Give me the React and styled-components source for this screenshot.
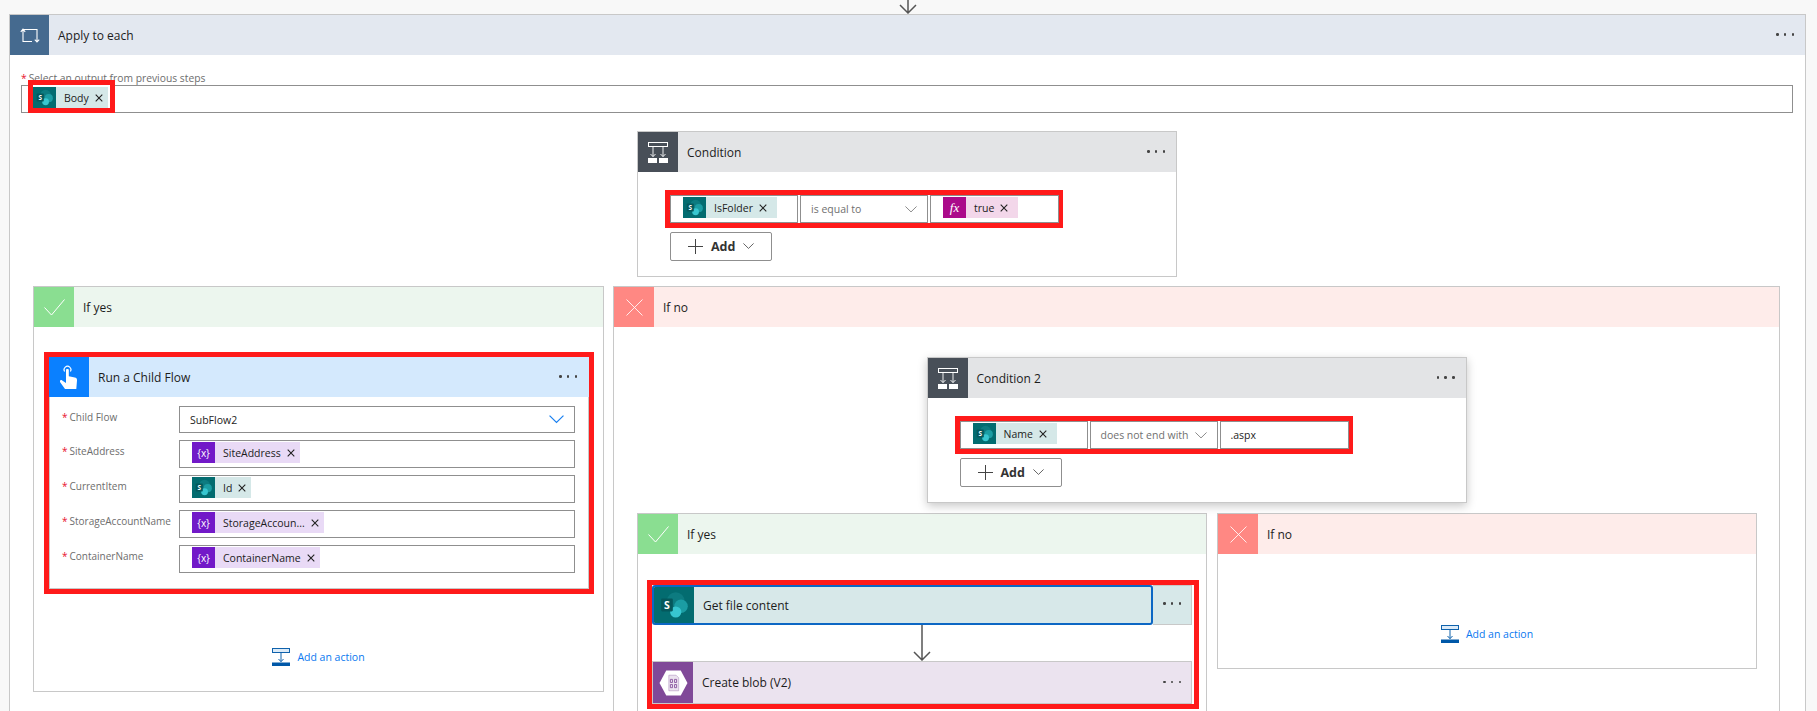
import React from "react";
import styled, { createGlobalStyle } from "styled-components";

const Global = createGlobalStyle`
  html, body { margin: 0; padding: 0; background: #f8f8f8; }
  * { box-sizing: border-box; }
  body { font-family: "Open Sans", "Noto Sans", "Liberation Sans", sans-serif; }
`;

const Page = styled.div`
  width: 1817px;
  height: 711px;
  overflow: hidden;
  background: #f8f8f8;
  padding-left: 9px;
`;
const TopArrow = styled.div`
  width: 1797px;
  height: 14px;
  display: flex;
  justify-content: center;
`;
const Scope = styled.section`
  width: 1797px;
  background: #fff;
  border: 1px solid #c8c8c8;
`;
const tones = {
  loop: ["#e3e8f0", "#456a8f"],
  cond: ["#e3e4e6", "#484f58"],
  flow: ["#d4e9fd", "#0a80ff"],
  yes: ["#ecf6ee", "#8ade91"],
  no: ["#feecea", "#ff8883"],
  sp: ["#d7e8e9", "#036c70"],
  blob: ["#ebe3ef", "#804998"],
};
const Header = styled.header`
  height: 40px;
  display: flex;
  align-items: center;
  flex: none;
  background: ${(p) => tones[p.$tone][0]};
`;
const IconBox = styled.div`
  width: ${(p) => p.$w || 40}px;
  height: 100%;
  flex: none;
  display: flex;
  align-items: center;
  justify-content: center;
  background: ${(p) => tones[p.$tone][1]};
`;
const Title = styled.div`
  flex: 1;
  margin-left: 9px;
  font-size: 12px;
  color: #1c1c1c;
`;
const Menu = styled.div`
  width: 18px;
  height: 4px;
  margin-right: ${(p) => p.$end}px;
  display: flex;
  justify-content: space-between;
  flex: none;
  & > i {
    width: 2.5px;
    height: 2.5px;
    background: #444;
    border-radius: 50%;
  }
`;
const Dots = ({ end = 11 }) => (
  <Menu $end={end}>
    <i />
    <i />
    <i />
  </Menu>
);
const ScopeBody = styled.div`
  padding: 16px 12px 0 11px;
`;
const Label = styled.div`
  height: 14px;
  font-size: 10.3px;
  line-height: 14px;
  color: #6d6d6d;
  white-space: nowrap;
  & > b {
    color: #e8112d;
    font-weight: 400;
    margin-right: 2px;
  }
`;
const Field = styled.div`
  height: ${(p) => p.$h || 28}px;
  border: 1px solid #8f8f8f;
  background: #fff;
  display: flex;
  align-items: ${(p) => (p.$center ? "center" : "flex-start")};
  justify-content: ${(p) => (p.$center ? "space-between" : "flex-start")};
  padding: ${(p) => (p.$center ? "0 10px" : "1px 0 0 12px")};
  font-size: 10.5px;
  color: ${(p) => p.$ink || "#1c1c1c"};
  white-space: nowrap;
  min-width: 0;
`;
const Highlight = styled.div`
  border: 5px solid #ff1a1a;
  background: #fff;
`;
const BodyMark = styled(Highlight)`
  margin: -7px 0 -1px -6px;
  padding: 2px 2px 0 0;
  display: flex;
  height: 33px;
`;
const Token = styled.div`
  height: 21px;
  display: inline-flex;
  align-items: center;
  flex: none;
  padding-right: ${(p) => p.$pad}px;
  background: ${(p) => (p.$kind === "sp" ? "#d5e8e8" : p.$kind === "fx" ? "#f3d7ea" : "#e9daf6")};
  font-size: 10.5px;
  color: #1c1c1c;
`;
const TokenIcon = styled.span`
  width: 23px;
  height: 100%;
  margin-right: 8px;
  flex: none;
  display: flex;
  align-items: center;
  justify-content: center;
  background: ${(p) => (p.$kind === "sp" ? "#036c70" : p.$kind === "fx" ? "#ab0a8a" : "#7219c8")};
  color: #fff;
  font-size: 10px;
`;
const Fx = styled.span`
  font-family: "Liberation Serif", serif;
  font-style: italic;
  font-size: 13px;
`;
const Remove = styled.svg`
  width: 8px;
  height: 8px;
  margin-left: 6px;
  flex: none;
`;
const SpLogo = ({ size = 17 }) => (
  <svg width={size} height={size} viewBox="0 0 24 24">
    <circle cx="13.5" cy="8.500" r="7.500" fill="#0d7b80" />
    <circle cx="18" cy="13" r="5.800" fill="#1b9da3" />
    <circle cx="13.500" cy="18" r="4.800" fill="#37c6d0" />
    <rect x="1" y="6.500" width="10" height="11" rx="1" fill="#05585c" />
    <text x="6" y="15" fontSize="9" fontWeight="700" fill="#fff" textAnchor="middle" fontFamily="Open Sans">
      S
    </text>
  </svg>
);
const Chip = ({ kind, pad = 5, children }) => (
  <Token $kind={kind} $pad={pad}>
    <TokenIcon $kind={kind}>
      {kind === "sp" ? <SpLogo /> : kind === "fx" ? <Fx>fx</Fx> : <span>{"{x}"}</span>}
    </TokenIcon>
    {children}
    <Remove viewBox="0 0 8 8">
      <path d="M.7.7l6.600 6.600M7.300.7L.7 7.300" stroke="#222" strokeWidth="1.100" />
    </Remove>
  </Token>
);
const Chevron = ({ color = "#8a8a8a", w = 12 }) => (
  <svg width={w} height={w * 0.55} viewBox="0 0 11 6" style={{ flex: "none" }}>
    <path d="M.4.4l5.100 5 5.100-5" fill="none" stroke={color} strokeWidth="0.9" />
  </svg>
);
const CondCard = styled.section`
  width: 540px;
  height: ${(p) => p.$h}px;
  flex: none;
  margin: ${(p) => p.$m};
  display: flex;
  flex-direction: column;
  background: #fff;
  border: 1px solid #c8c8c8;
  ${(p) => p.$raised && "box-shadow: 0 3px 9px rgba(0,0,0,.22); position: relative;"}
`;
const CondMark = styled(Highlight)`
  width: 398px;
  margin: 18px 0 0 27px;
  display: grid;
  grid-template-columns: 128px 128px 129px;
  column-gap: 2px;
  height: 38px;
`;
const AddButton = styled.div`
  width: 102px;
  height: 29px;
  margin: 4px 0 0 32px;
  border: 1px solid #8f8f8f;
  border-radius: 2px;
  display: flex;
  align-items: center;
  padding-left: 17px;
  font-size: 12.5px;
  font-weight: 700;
  color: #333;
`;
const AddLabel = styled.span`
  margin: 0 8px 0 8px;
`;
const Branches = styled.div`
  display: grid;
  grid-template-columns: ${(p) => p.$cols};
  column-gap: ${(p) => p.$gap}px;
  align-items: start;
  margin: ${(p) => p.$m};
`;
const Panel = styled.section`
  border: 1px solid #c8c8c8;
  background: #fff;
  display: flex;
  flex-direction: column;
`;
const PanelBody = styled.div`
  padding: ${(p) => p.$p};
  display: flex;
  flex-direction: column;
`;
const FlowMark = styled(Highlight)`
  height: 242px;
  display: flex;
  flex-direction: column;
`;
const FlowCard = styled.div`
  flex: 1;
  border: 1px solid #c8c8c8;
  border-top: 0;
  display: flex;
  flex-direction: column;
`;
const FieldGrid = styled.div`
  padding: 9px 13px 0 12px;
  display: grid;
  grid-template-columns: 117px 1fr;
  row-gap: 7px;
`;
const FieldLabel = styled.div`
  font-size: 10px;
  line-height: 14px;
  padding-top: 4px;
  color: #6d6d6d;
  white-space: nowrap;
  & > b {
    color: #e8112d;
    font-weight: 400;
    margin-right: 2px;
  }
`;
const AddAction = styled.div`
  display: flex;
  align-items: center;
  justify-content: center;
  gap: 7px;
  margin-top: ${(p) => p.$top}px;
  margin-bottom: ${(p) => p.$bottom}px;
  height: 18px;
  font-size: 10.5px;
  color: #0a78f0;
`;
const AddIcon = () => (
  <svg width="18" height="18" viewBox="0 0 18 18">
    <rect x=".5" y=".5" width="17" height="4" fill="#dcebf8" stroke="#0f62ac" />
    <path d="M9 4.500v9M6.500 11l2.500 2.700 2.500-2.700" fill="none" stroke="#0f62ac" />
    <rect y="14.500" width="18" height="3.500" fill="#0058a8" />
  </svg>
);
const ActionMark = styled(Highlight)`
  height: 129px;
  display: flex;
  flex-direction: column;
  padding-right: 2px;
`;
const StepRow = styled.div`
  display: flex;
  height: 40px;
  flex: none;
`;
const StepHead = styled(Header)`
  width: 501px;
  height: 40px;
  border: 2px solid #0c67c4;
  border-radius: 3px;
  overflow: hidden;
`;
const StepMenu = styled.div`
  flex: 1;
  background: #d7e8e9;
  border: 1px solid #c8c8c8;
  border-left: 0;
  display: flex;
  align-items: center;
  justify-content: flex-end;
  padding-bottom: 2px;
`;
const Connector = styled.div`
  height: 36px;
  display: flex;
  justify-content: center;
  flex: none;
`;
const BlobStep = styled(Header)`
  height: 43px;
  border: 1px solid #c8c8c8;
`;

const LoopIcon = () => (
  <svg width="20" height="15" viewBox="0 0 20 15" fill="none" stroke="#fff" strokeWidth="1.100">
    <path d="M3 14V1.500h14V14M.8 3.800L3 1.200l2.200 2.600M14.800 11.600L17 14l2.200-2.400M3 13.500h9" />
  </svg>
);
const CondIcon = () => (
  <svg width="20" height="21" viewBox="0 0 20 21" fill="none" stroke="#fff">
    <rect x=".5" y=".5" width="19" height="4" strokeWidth="1" />
    <path d="M5 4.500v10M15 4.500v10M2.500 12l2.500 2.600L7.500 12M12.500 12l2.500 2.600 2.500-2.600" strokeWidth=".9" />
    <rect y="16" width="9" height="5" fill="#fff" stroke="none" />
    <rect x="11" y="16" width="9" height="5" fill="#fff" stroke="none" />
  </svg>
);
const CheckIcon = () => (
  <svg width="21" height="17" viewBox="0 0 21 17">
    <path d="M.5 8.500l7 7.500L20.500.5" fill="none" stroke="#fff" strokeWidth="1" />
  </svg>
);
const CrossIcon = () => (
  <svg width="17" height="17" viewBox="0 0 17 17">
    <path d="M.5.5l16 16M16.500.5l-16 16" fill="none" stroke="#fff" strokeWidth="1" opacity=".85" />
  </svg>
);
const HandIcon = () => (
  <svg width="18" height="24" viewBox="0 0 18 24">
    <path d="M4.600 6.500a3.400 3.400 0 1 1 5.800 0" fill="none" stroke="#fff" strokeWidth="1.200" />
    <path
      d="M6 5c0-1.400 2.800-1.400 2.800 0v6.200l6 1.400c1.500.4 2.400 1.300 2.200 2.800L16.300 24H5l-5-7c-.9-1.400.9-2.800 2.200-1.600L6 18z"
      fill="#fff"
    />
  </svg>
);
const BlobIcon = () => (
  <svg width="29" height="26" viewBox="0 0 28 25">
    <path d="M7 .5h14L27.500 12.500 21 24.500H7L.5 12.500z" fill="#fff" />
    <path d="M9.500 5h7l2.500 2.500V20h-9.500z" fill="#ebe3ef" stroke="#b497c4" strokeWidth=".6" />
    <path d="M11 9h2v3h-2zM15 9h2v3h-2zM11 14h2v3h-2zM15 14h2v3h-2z" fill="none" stroke="#804998" strokeWidth=".8" />
  </svg>
);
const DownArrow = ({ h }) => (
  <svg width="18" height={h} viewBox={`0 0 18 ${h}`} fill="none" stroke="#555" strokeWidth="1.500">
    <path d={`M9 0v${h - 1}M1 ${h - 9}L9 ${h - 1}l8-8`} />
  </svg>
);

const Condition = ({ title, raised, height, margin, left, op, right }) => (
  <CondCard $h={height} $m={margin} $raised={raised}>
    <Header $tone="cond">
      <IconBox $tone="cond">
        <CondIcon />
      </IconBox>
      <Title>{title}</Title>
      <Dots />
    </Header>
    <CondMark>
      <Field $h={28}>{left}</Field>
      <Field $h={28} $center $ink="#707070">
        {op}
        <Chevron />
      </Field>
      {right}
    </CondMark>
    <AddButton>
      <svg width="15" height="15" viewBox="0 0 15 15">
        <path d="M7.500 0v15M0 7.500h15" stroke="#444" strokeWidth="1" />
      </svg>
      <AddLabel>Add</AddLabel>
      <Chevron color="#555" w={11} />
    </AddButton>
  </CondCard>
);

const Branch = ({ tone, title, children }) => (
  <Panel>
    <Header $tone={tone}>
      <IconBox $tone={tone}>{tone === "yes" ? <CheckIcon /> : <CrossIcon />}</IconBox>
      <Title>{title}</Title>
    </Header>
    {children}
  </Panel>
);

const fields = [
  ["SiteAddress", "var", "SiteAddress"],
  ["CurrentItem", "sp", "Id"],
  ["StorageAccountName", "var", "StorageAccoun..."],
  ["ContainerName", "var", "ContainerName"],
];

export default function App() {
  return (
    <Page>
      <Global />
      <TopArrow>
        <DownArrow h={14} />
      </TopArrow>
      <Scope>
        <Header $tone="loop">
          <IconBox $tone="loop" $w={39}>
            <LoopIcon />
          </IconBox>
          <Title>Apply to each</Title>
          <Dots />
        </Header>
        <ScopeBody>
          <Label>
            <b>*</b>Select an output from previous steps
          </Label>
          <Field>
            <BodyMark>
              <Chip kind="sp">Body</Chip>
            </BodyMark>
          </Field>
          <Condition
            title="Condition"
            height={146}
            margin="18px auto 0"
            left={<Chip kind="sp" pad={10}>IsFolder</Chip>}
            op="is equal to"
            right={
              <Field $h={28}>
                <Chip kind="fx" pad={10}>true</Chip>
              </Field>
            }
          />
          <Branches $cols="571px 1167px" $gap={9} $m="9px 0 0 12px">
            <Branch tone="yes" title="If yes">
              <PanelBody $p="25px 9px 0 10px">
                <FlowMark>
                  <Header $tone="flow">
                    <IconBox $tone="flow">
                      <HandIcon />
                    </IconBox>
                    <Title>Run a Child Flow</Title>
                    <Dots end={12} />
                  </Header>
                  <FlowCard>
                    <FieldGrid>
                      <FieldLabel>
                        <b>*</b>Child Flow
                      </FieldLabel>
                      <Field $h={27} $center>
                        SubFlow2
                        <Chevron color="#1a80f0" w={15} />
                      </Field>
                      {fields.map(([label, kind, value]) => (
                        <React.Fragment key={label}>
                          <FieldLabel>
                            <b>*</b>
                            {label}
                          </FieldLabel>
                          <Field>
                            <Chip kind={kind}>{value}</Chip>
                          </Field>
                        </React.Fragment>
                      ))}
                    </FieldGrid>
                  </FlowCard>
                </FlowMark>
              </PanelBody>
              <AddAction $top={54} $bottom={25}>
                <AddIcon />
                Add an action
              </AddAction>
            </Branch>
            <Branch tone="no" title="If no">
              <PanelBody $p="30px 0 30px 0">
                <Condition
                  title="Condition 2"
                  raised
                  height={146}
                  margin="0 auto"
                  left={<Chip kind="sp" pad={10}>Name</Chip>}
                  op="does not end with"
                  right={<Field $h={28} $center>.aspx</Field>}
                />
                <Branches $cols="570px 540px" $gap={10} $m="10px 0 0 23px">
                  <Branch tone="yes" title="If yes">
                    <PanelBody $p="26px 7px 26px 9px">
                      <ActionMark>
                        <StepRow>
                          <StepHead as="div" $tone="sp">
                            <IconBox $tone="sp">
                              <SpLogo size={28} />
                            </IconBox>
                            <Title>Get file content</Title>
                          </StepHead>
                          <StepMenu>
                            <Dots end={10} />
                          </StepMenu>
                        </StepRow>
                        <Connector>
                          <DownArrow h={36} />
                        </Connector>
                        <BlobStep as="div" $tone="blob">
                          <IconBox $tone="blob">
                            <BlobIcon />
                          </IconBox>
                          <Title>Create blob (V2)</Title>
                          <Dots end={10} />
                        </BlobStep>
                      </ActionMark>
                    </PanelBody>
                  </Branch>
                  <Branch tone="no" title="If no">
                    <AddAction $top={71} $bottom={25}>
                      <AddIcon />
                      Add an action
                    </AddAction>
                  </Branch>
                </Branches>
              </PanelBody>
            </Branch>
          </Branches>
        </ScopeBody>
      </Scope>
    </Page>
  );
}
